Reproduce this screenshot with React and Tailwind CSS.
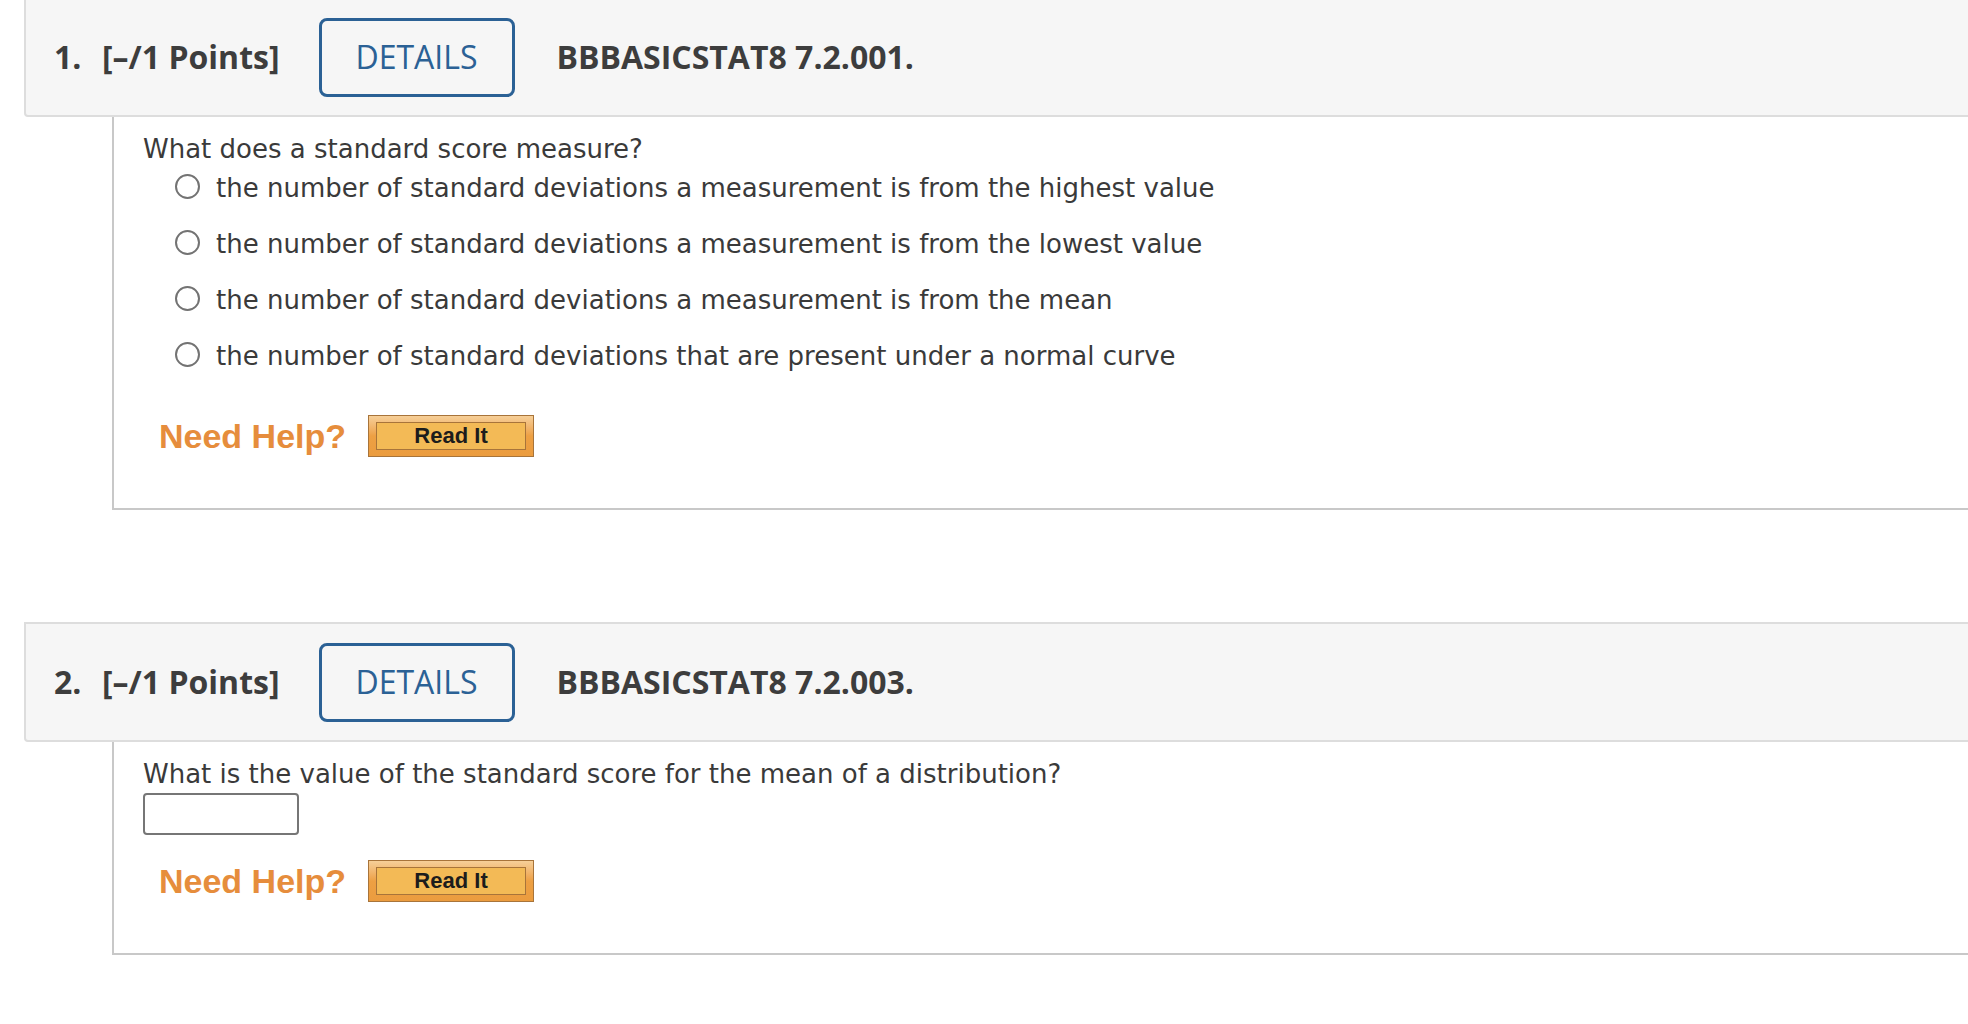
import React from 'react';

const questions = [
  {
    num: '1.',
    code: 'BBBASICSTAT8 7.2.001.',
    prompt: 'What does a standard score measure?',
    options: [
      'the number of standard deviations a measurement is from the highest value',
      'the number of standard deviations a measurement is from the lowest value',
      'the number of standard deviations a measurement is from the mean',
      'the number of standard deviations that are present under a normal curve',
    ],
  },
  {
    num: '2.',
    code: 'BBBASICSTAT8 7.2.003.',
    prompt: 'What is the value of the standard score for the mean of a distribution?',
    input: true,
  },
];

const headFont = { fontFamily: '"Open Sans", "Liberation Sans", sans-serif' };
const bodyFont = { fontFamily: '"DejaVu Sans", Verdana, sans-serif' };
const helpFont = { fontFamily: '"Liberation Sans", Arial, sans-serif' };

const NeedHelp = () => (
  <div className="flex items-center h-[42px] ml-[16px]">
    <span style={helpFont} className="text-[34px] font-bold leading-[42px] text-[#e68d3c]">
      Need Help?
    </span>
    <button className="ml-[22px] w-[166px] h-[42px] p-[6px_7px_6px_7px] border border-[#a8743a] bg-gradient-to-b from-[#f6cf98] via-[#eda043] to-[#eb9c3f]">
      <span
        style={helpFont}
        className="flex items-center justify-center w-full h-full border border-[#a8743a] bg-[#f3ba56] text-[22px] font-bold text-[#1c1c1c] leading-none"
      >
        Read It
      </span>
    </button>
  </div>
);

const Question = ({ q, first }) => (
  <div className={first ? '-mt-[3px]' : 'mt-[112px]'}>
    {/* Header bar */}
    <div
      style={headFont}
      className="flex items-center h-[120px] -mr-[40px] pl-[28px] bg-[#f6f6f6] border-2 border-[#dddddd] rounded-bl-[4px] text-[#3d3d3d]"
    >
      <span className="w-[48px] text-[32px] font-bold leading-[44px]">{q.num}</span>
      <span className="text-[32px] font-bold leading-[44px]">[–/1 Points]</span>
      <button className="ml-[39px] w-[196px] h-[79px] flex items-center justify-center border-[3px] border-[#2b6195] rounded-[8px] text-[32px] font-medium leading-[44px] text-[#2b6195]">
        DETAILS
      </button>
      <span className="ml-[42px] text-[32px] font-bold leading-[44px]">{q.code}</span>
    </div>

    {/* Body */}
    <div
      style={bodyFont}
      className="ml-[88px] -mr-[40px] pl-[29px] pt-[16px] pb-[51px] border-l-2 border-b-2 border-[#c8c8c8] text-[26px] text-[#3a3a3a]"
    >
      <p className="leading-[32px]">{q.prompt}</p>

      {q.options && (
        <div className="flex flex-col gap-[24px] mt-[7px] pl-[32px]">
          {q.options.map((opt) => (
            <label key={opt} className="flex items-center h-[32px]">
              <span className="w-[25px] h-[25px] -mt-[3px] rounded-full border-2 border-[#737373] bg-white shrink-0" />
              <span className="ml-[16px] leading-[32px]">{opt}</span>
            </label>
          ))}
        </div>
      )}

      {q.input && (
        <div className="mt-[3px] w-[156px] h-[42px] border-2 border-[#767676] rounded-[4px] bg-white" />
      )}

      <div className={q.options ? 'mt-[43px]' : 'mt-[25px]'}>
        <NeedHelp />
      </div>
    </div>
  </div>
);

export default function App() {
  return (
    <div className="w-[1968px] min-h-[1024px] overflow-hidden bg-white pl-[24px]">
      {questions.map((q, i) => (
        <Question key={q.num} q={q} first={i === 0} />
      ))}
    </div>
  );
}
